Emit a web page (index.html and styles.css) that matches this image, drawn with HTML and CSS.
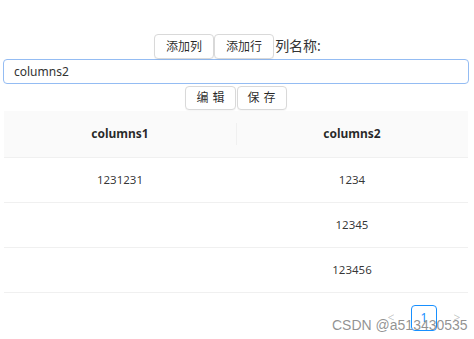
FILE: index.html
```html
<!DOCTYPE html>
<html lang="zh">
<head>
<meta charset="utf-8">
<title>表格编辑</title>
<link rel="stylesheet" href="styles.css">
</head>
<body>
<div class="page">
  <div class="toolbar">
    <button class="btn">添加列</button>
    <button class="btn">添加行</button>
    <span class="label">列名称:</span>
  </div>
  <input class="name-input" type="text" value="columns2">
  <div class="actions">
    <button class="btn btn-sm"><span class="spaced">编辑</span></button>
    <button class="btn btn-sm"><span class="spaced">保存</span></button>
  </div>
  <table class="grid">
    <thead>
      <tr><th><span class="th-text">columns1</span></th><th class="sep"><span class="th-text">columns2</span></th></tr>
    </thead>
    <tbody>
      <tr><td>1231231</td><td>1234</td></tr>
      <tr><td></td><td>12345</td></tr>
      <tr><td></td><td>123456</td></tr>
    </tbody>
  </table>
  <div class="pager">
    <span class="pg-arrow">&lt;</span>
    <span class="pg-item">1</span>
    <span class="pg-arrow">&gt;</span>
  </div>
</div>
<div class="watermark">CSDN @a513430535</div>
</body>
</html>
```
FILE: styles.css
```css
* { box-sizing: border-box; }
html, body {
  margin: 0;
  padding: 0;
  background: #fff;
}
body {
  font-family: "Noto Sans", "Noto Sans CJK SC", sans-serif;
  color: rgba(0, 0, 0, 0.85);
  position: relative;
  width: 474px;
  height: 339px;
  overflow: hidden;
}
.page {
  padding: 33px 5px 0 3px;
}
.toolbar {
  display: flex;
  justify-content: center;
  align-items: center;
  height: 26px;
  padding-left: 3px;
}
.btn {
  font-family: "Noto Sans", "Noto Sans CJK SC", sans-serif;
  font-size: 12px;
  height: 25px;
  padding: 0 11px;
  margin: 0;
  border: 1px solid #d9d9d9;
  border-radius: 4px;
  background: #fff;
  color: rgba(0, 0, 0, 0.85);
  line-height: 23px;
  white-space: nowrap;
  box-shadow: 0 1px 1px rgba(0, 0, 0, 0.04);
}
.label {
  font-size: 14px;
  color: #333;
  margin-left: 1px;
  line-height: 26px;
}
.name-input {
  display: block;
  width: 466px;
  height: 25px;
  margin: 0;
  padding: 0 10px;
  border: 1px solid #94bcf3;
  border-radius: 4px;
  font-family: "Noto Sans", "Noto Sans CJK SC", sans-serif;
  font-size: 12px;
  color: #333;
  outline: none;
}
.actions {
  display: flex;
  justify-content: center;
  margin-top: 2px;
  height: 25px;
}
.btn-sm {
  height: 24px;
  padding: 0 10px;
  line-height: 22px;
}
.btn-sm + .btn-sm { margin-left: 1px; }
.spaced {
  letter-spacing: 0.34em;
  margin-right: -0.34em;
  white-space: nowrap;
}
.grid {
  width: 464px;
  margin: 0 0 0 1px;
  border-collapse: collapse;
  table-layout: fixed;
}
.grid th {
  height: 46px;
  background: #fafafa;
  font-size: 12px;
  font-weight: 700;
  color: rgba(0, 0, 0, 0.85);
  border-bottom: 1px solid #f0f0f0;
  text-align: center;
  padding: 0;
}
.grid th.sep {
  position: relative;
}
.grid th.sep::before {
  content: "";
  position: absolute;
  left: 0;
  top: 12px;
  height: 22px;
  width: 1px;
  background: #f0f0f0;
}
.grid td {
  height: 45px;
  font-size: 11.5px;
  color: rgba(0, 0, 0, 0.8);
  border-bottom: 1px solid #f0f0f0;
  text-align: center;
  padding: 0;
}
.pager {
  display: flex;
  justify-content: flex-end;
  align-items: center;
  margin-top: 12px;
  height: 26px;
}
.pg-arrow {
  width: 24px;
  text-align: center;
  font-size: 12px;
  color: rgba(0, 0, 0, 0.25);
  margin-left: 8px;
}
.pg-item {
  width: 26px;
  height: 26px;
  margin-left: 8px;
  border: 1px solid #1890ff;
  border-radius: 4px;
  color: #1890ff;
  font-size: 12px;
  text-align: center;
  line-height: 24px;
}
.watermark {
  position: absolute;
  left: 332px;
  top: 317px;
  font-family: "Liberation Sans", Arial, sans-serif;
  font-size: 14px;
  color: rgba(110, 110, 110, 0.75);
  white-space: nowrap;
}
```
